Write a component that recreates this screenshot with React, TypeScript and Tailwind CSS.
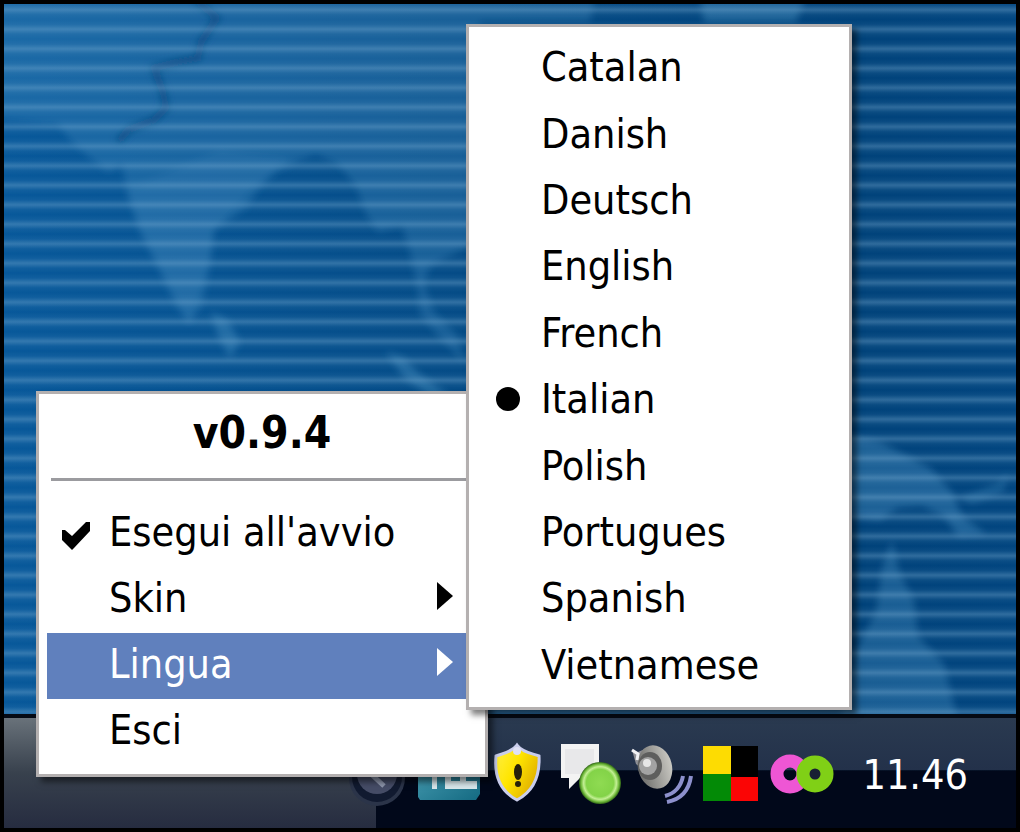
import { useState } from "react";

const languages = [
  "Catalan",
  "Danish",
  "Deutsch",
  "English",
  "French",
  "Italian",
  "Polish",
  "Portugues",
  "Spanish",
  "Vietnamese",
];

function Wallpaper() {
  return (
    <svg
      className="absolute inset-0 h-full w-full"
      viewBox="4 4 1012 712"
      preserveAspectRatio="xMinYMin slice"
      aria-hidden="true"
    >
      <defs>
        <linearGradient id="sea" x1="0" y1="0" x2="1" y2="0">
          <stop offset="0" stopColor="#07589a" />
          <stop offset="0.45" stopColor="#044b86" />
          <stop offset="0.85" stopColor="#00427a" />
          <stop offset="1" stopColor="#01457f" />
        </linearGradient>
        <linearGradient id="stripe" x1="0" y1="0" x2="0" y2="1">
          <stop offset="0" stopColor="#7fb0d4" stopOpacity="0" />
          <stop offset="0.25" stopColor="#7fb0d4" stopOpacity="0.08" />
          <stop offset="0.5" stopColor="#7fb0d4" stopOpacity="0.38" />
          <stop offset="0.75" stopColor="#7fb0d4" stopOpacity="0.08" />
          <stop offset="1" stopColor="#7fb0d4" stopOpacity="0" />
        </linearGradient>
        <pattern id="stripes" width="20" height="19.5" patternUnits="userSpaceOnUse">
          <rect width="20" height="19.5" fill="url(#stripe)" />
        </pattern>
        <filter id="soft">
          <feGaussianBlur stdDeviation="3.5" />
        </filter>
      </defs>
      <rect x="4" y="4" width="1012" height="712" fill="url(#sea)" />
      <g filter="url(#soft)" fill="#4a94c4" fillOpacity="0.28">
        {/* Asia */}
        <path d="M-10-10V118L58 124 72 142 90 158 108 172 122 164 128 196 140 232 158 268 176 306 189 324 202 306 210 266 214 230 246 208 258 190 276 172 300 160 316 154 338 164 356 186 366 214 378 232 402 226 410 252 418 290 420 314 440 338 464 362 456 334 434 312 424 284 430 266 480 240V22L590 22 596-10Z" />
        <path d="M126 190 140 230 189 322 210 260 214 230 250 190 290 158 220 150Z" fillOpacity="0.14" />
        <path d="M700-4H806L796 22H704Z" fillOpacity="0.4" />
        {/* islands */}
        <path d="M211 312 228 320 240 342 230 358 218 336Z" fillOpacity="0.4" />
        <path d="M386 352 404 358 420 374 450 396 430 396 404 378Z" fillOpacity="0.4" />
        {/* New Guinea and Australia */}
        <path d="M840 434 880 442 930 468 952 492 962 516 986 534 958 536 944 516 922 506 898 508 880 520 850 516Z" fillOpacity="0.38" />
        <path d="M960 498 1000 482 1008 472 1004 492 972 504Z" />
        <path d="M892 540 900 574 914 600 918 636 944 664 958 722H840L856 650 876 612 882 568Z" fillOpacity="0.34" />
      </g>
      <path
        d="M196 0 217 18 201 42 198 58 178 62 154 68 163 92 166 108 154 120 128 130 118 142"
        filter="url(#soft)"
        fill="none"
        stroke="#0a4c86"
        strokeOpacity="0.9"
        strokeWidth="7"
      />
      <rect x="4" y="4" width="1012" height="712" fill="url(#stripes)" />
    </svg>
  );
}

function ChevronIcon() {
  return (
    <svg width="58" height="66" viewBox="0 0 58 66" aria-hidden="true">
      <circle cx="29" cy="38" r="28" fill="#2b3449" />
      <circle cx="29" cy="37" r="25" fill="#111a30" />
      <circle cx="29" cy="34" r="20" fill="#454c66" />
      <path d="M36 20 22 33 36 46" fill="none" stroke="#8c94aa" strokeWidth="5" />
    </svg>
  );
}

function KeyboardIcon() {
  return (
    <svg width="70" height="66" viewBox="0 0 70 66" aria-hidden="true">
      <defs>
        <linearGradient id="kb" x1="0" y1="0" x2="1" y2="1">
          <stop offset="0" stopColor="#4a9fb4" />
          <stop offset="1" stopColor="#146a82" />
        </linearGradient>
      </defs>
      <path d="M4 18H66V54L62 60H6L4 57Z" fill="url(#kb)" />
      <path d="M18 32h5v17h-5zM31 32h6v9h-6zM31 41h32v8H31zM46 32h6v9h-6z" fill="#d7e6ea" />
    </svg>
  );
}

function ShieldIcon() {
  return (
    <svg width="52" height="66" viewBox="0 0 52 66" aria-hidden="true">
      <defs>
        <linearGradient id="shield" x1="0" y1="0" x2="1" y2="0.6">
          <stop offset="0" stopColor="#fff04a" />
          <stop offset="0.5" stopColor="#ffe500" />
          <stop offset="1" stopColor="#e0ae00" />
        </linearGradient>
      </defs>
      <path
        d="M25 5C30 12 39 13 47 16C48 36 42 51 25 60C8 51 2 36 4 16C12 13 20 12 25 5Z"
        fill="url(#shield)"
        stroke="#c9cdec"
        strokeWidth="3"
      />
      <circle cx="25" cy="11" r="4" fill="#dfe1f4" />
      <ellipse cx="26" cy="32" rx="4" ry="8" fill="#26210a" />
      <circle cx="26" cy="44" r="3" fill="#26210a" />
    </svg>
  );
}

function MessageIcon() {
  return (
    <svg width="70" height="66" viewBox="0 0 70 66" aria-hidden="true">
      <defs>
        <radialGradient id="orb" cx="0.5" cy="0.5" r="0.5">
          <stop offset="0" stopColor="#8fdb52" />
          <stop offset="0.65" stopColor="#83d348" />
          <stop offset="0.78" stopColor="#c4ef95" />
          <stop offset="0.9" stopColor="#6fb93a" />
          <stop offset="1" stopColor="#2f6416" />
        </radialGradient>
      </defs>
      <path d="M9 4H47V38H28L17 49V38H9Z" fill="#f3f3f3" />
      <path d="M13 9H42V34H13Z" fill="#e8e8ea" />
      <circle cx="48" cy="43" r="21" fill="url(#orb)" />
    </svg>
  );
}

function SpeakerIcon() {
  return (
    <svg width="64" height="66" viewBox="0 0 64 66" aria-hidden="true">
      <defs>
        <linearGradient id="cone" x1="0" y1="0" x2="1" y2="0">
          <stop offset="0" stopColor="#6d6d6b" />
          <stop offset="1" stopColor="#c9c8c2" />
        </linearGradient>
      </defs>
      <path d="M2 10 8 12 22 6 16 32 6 24Z" fill="#8f9096" />
      <ellipse cx="25" cy="27" rx="17" ry="22" fill="url(#cone)" transform="rotate(-14 25 27)" />
      <ellipse cx="20" cy="26" rx="12" ry="14" fill="#5e5e5d" />
      <circle cx="18" cy="26" r="9" fill="#a3a3a3" />
      <circle cx="17" cy="23" r="4" fill="#e6e6e6" />
      <path d="M2 10 8 14 7 20" fill="none" stroke="#f2f2f5" strokeWidth="3" />
      <path
        d="M35 56Q50 52 53 36M37 62Q58 58 61 36"
        fill="none"
        stroke="#8d90cc"
        strokeWidth="4"
      />
    </svg>
  );
}

function SquaresIcon() {
  return (
    <svg width="58" height="66" viewBox="0 0 58 66" aria-hidden="true">
      <path d="M1 6H29V34H1Z" fill="#fddc02" />
      <path d="M29 6H56V37H29Z" fill="#000000" />
      <path d="M1 34H29V61H1Z" fill="#038a06" />
      <path d="M29 37H56V61H29Z" fill="#fb0505" />
    </svg>
  );
}

function RingsIcon() {
  return (
    <svg width="68" height="66" viewBox="0 0 68 66" fill="none" aria-hidden="true">
      <circle cx="22" cy="34" r="13" stroke="#ee56d4" strokeWidth="13" />
      <circle cx="47" cy="34" r="6" fill="#182033" />
      <circle cx="47" cy="34" r="12" stroke="#80d016" strokeWidth="13" />
    </svg>
  );
}

function Arrow() {
  return (
    <svg className="mr-6 mb-1 ml-auto" width="17" height="28" viewBox="0 0 17 28" aria-hidden="true">
      <path d="M1 0 17 14 1 28Z" fill="currentColor" />
    </svg>
  );
}

export default function App() {
  const [runAtStartup, setRunAtStartup] = useState(true);
  const [language, setLanguage] = useState("Italian");
  const [open, setOpen] = useState(true);

  return (
    <div className="relative flex min-h-screen flex-col overflow-hidden border-4 border-black bg-black font-['DejaVu_Sans_Condensed','DejaVu_Sans',sans-serif] text-[41px] leading-[62px] text-black">
      <main className="relative flex-1">
        <Wallpaper />
      </main>

      <footer className="flex h-[114px] border-t-4 border-[#050a14] bg-linear-to-b from-[#2a3a50] from-0% via-[#23314a] via-47% to-[#01081a] to-48%">
        <div className="w-[372px] bg-linear-to-b from-[#69727a] via-[#38414d] via-50% to-[#262c40]" />
        <div className="flex flex-1 items-center gap-2 pr-12">
          <button type="button" aria-label="Mostra icone nascoste" className="-ml-7">
            <ChevronIcon />
          </button>
          <KeyboardIcon />
          <ShieldIcon />
          <MessageIcon />
          <SpeakerIcon />
          <SquaresIcon />
          <RingsIcon />
          <time className="ml-auto pt-1 text-white">11.46</time>
        </div>
      </footer>

      <nav className="absolute bottom-[51px] left-8 w-[452px] border-3 border-[#b4b0b0] bg-white pb-[9px] shadow-[5px_5px_6px_rgba(0,0,0,0.5)]">
        <h1 className="pt-2 pb-3.5 text-center text-[44px] font-bold">v0.9.4</h1>
        <hr className="mx-3 mb-5 border-t-3 border-[#9b9b9f]" />
        <ul className="px-2">
          <li>
            <label className="flex items-center pb-1">
              <input
                type="checkbox"
                className="peer sr-only"
                checked={runAtStartup}
                onChange={(e) => setRunAtStartup(e.target.checked)}
              />
              <span className="flex w-[62px] pt-2 pl-3.5 opacity-0 peer-checked:opacity-100">
                <svg width="30" height="28" viewBox="0 0 30 28" aria-hidden="true">
                  <path d="M1 8H4L11 14 25 0H29V9L13 26 11 28 9 26 1 18Z" fill="#000" />
                </svg>
              </span>
              Esegui all'avvio
            </label>
          </li>
          <li>
            <button type="button" className="flex w-full items-center pb-1 pl-[62px]">
              Skin
              <Arrow />
            </button>
          </li>
          <li className="relative">
            <button
              type="button"
              aria-expanded={open}
              onClick={() => setOpen(!open)}
              className="flex w-full items-center bg-[#6080bd] pb-1 pl-[62px] text-white"
            >
              Lingua
              <Arrow />
            </button>
            {open && (
              <fieldset
                aria-label="Lingua"
                className="absolute -bottom-[11px] left-[419px] grid h-[686px] w-[386px] auto-rows-fr border-3 border-[#b4b0b0] bg-white py-2 shadow-[5px_5px_6px_rgba(0,0,0,0.5)]"
              >
                {languages.map((name) => (
                  <label key={name} className="flex items-center pb-0.5">
                    <input
                      type="radio"
                      name="language"
                      className="peer sr-only"
                      checked={language === name}
                      onChange={() => setLanguage(name)}
                    />
                    <span className="w-[72px] pl-[27px] opacity-0 peer-checked:opacity-100">
                      <span className="block size-6 rounded-full bg-black" />
                    </span>
                    {name}
                  </label>
                ))}
              </fieldset>
            )}
          </li>
          <li>
            <button type="button" className="flex w-full items-center pb-1 pl-[62px]">
              Esci
            </button>
          </li>
        </ul>
      </nav>
    </div>
  );
}
